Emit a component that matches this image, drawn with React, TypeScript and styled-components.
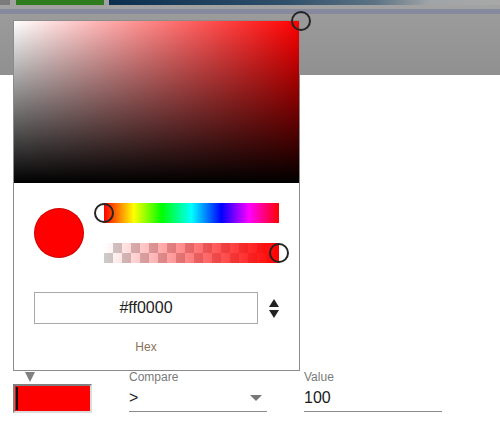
import React from "react";
import styled, { createGlobalStyle } from "styled-components";

const Global = createGlobalStyle`
  html, body { margin: 0; padding: 0; background: #fff; }
  body { font-family: "Liberation Sans", Arial, sans-serif; }
  * { box-sizing: border-box; }
`;

const Page = styled.div`
  position: relative;
  width: 500px;
  height: 427px;
  overflow: hidden;
  background: #fff;
`;

const Header = styled.div`
  display: flex;
  flex-direction: column;
  background: #a2a2a2;
`;

const TopStrip = styled.div`
  display: flex;
  height: 5px;
`;

const Seg = styled.div<{ $w?: number; $bg: string }>`
  width: ${(p) => (p.$w ? `${p.$w}px` : "auto")};
  flex: ${(p) => (p.$w ? "none" : "1")};
  background: ${(p) => p.$bg};
`;

const Spacer = styled.div`
  height: 4px;
`;

const Band = styled.div`
  height: 5px;
  background: #878a9f;
`;

const Shade = styled.div`
  height: 61px;
  background: linear-gradient(#9b9b9b, #909090);
`;

const FormRow = styled.div`
  display: flex;
  align-items: flex-start;
  margin-top: 295px;
  padding-left: 13px;
`;

const SwatchBox = styled.div`
  display: flex;
  width: 79px;
  height: 29px;
  margin-top: 14px;
  border: 2px solid;
  border-color: #808080 #dcdcdc #dcdcdc #808080;
  background: #ff0000;
`;

const Caret = styled.div`
  width: 1.5px;
  height: 23px;
  margin: 1px 0 0 1px;
  background: #111;
`;

const Field = styled.div<{ $ml: number }>`
  display: flex;
  flex-direction: column;
  width: 138px;
  margin-left: ${(p) => p.$ml}px;
`;

const Label = styled.div`
  font-size: 12px;
  line-height: 14px;
  color: #7a7a7a;
`;

const Control = styled.div`
  display: flex;
  align-items: center;
  justify-content: space-between;
  margin-top: 4px;
  padding-bottom: 3px;
  border-bottom: 1px solid #8a8a8a;
  font-size: 16px;
  line-height: 20px;
  color: #1a1a1a;
`;

const DropTri = styled.div`
  width: 0;
  height: 0;
  margin-right: 5px;
  border-left: 6.5px solid transparent;
  border-right: 6.5px solid transparent;
  border-top: 6px solid #777;
`;

const Popover = styled.div`
  position: absolute;
  left: 13px;
  top: 20px;
  width: 287px;
  border: 1px solid #8c8c8c;
  background: #fff;
`;

const PopArrow = styled.div`
  position: absolute;
  left: 11px;
  bottom: -12px;
  width: 0;
  height: 0;
  border-left: 5.5px solid transparent;
  border-right: 5.5px solid transparent;
  border-top: 10px solid #808080;
`;

const SatArea = styled.div`
  position: relative;
  height: 162px;
  background: linear-gradient(to top, #000, rgba(0, 0, 0, 0)),
    linear-gradient(to right, #fff, #f00);
`;

const Handle = styled.div`
  position: absolute;
  width: 20px;
  height: 20px;
  border: 2px solid #242424;
  border-radius: 50%;
`;

const SatHandle = styled(Handle)`
  top: -10px;
  right: -12px;
`;

const Body = styled.div`
  display: flex;
  flex-direction: column;
  padding: 20px 20px 16px 20px;
`;

const TopRow = styled.div`
  display: flex;
  align-items: center;
  gap: 20px;
`;

const Preview = styled.div`
  width: 50px;
  height: 50px;
  border-radius: 50%;
  background: #ff0000;
  box-shadow: inset 0 0 0 1px rgba(0, 0, 0, 0.2);
`;

const Sliders = styled.div`
  display: flex;
  flex-direction: column;
  gap: 20px;
  width: 175px;
`;

const HueBar = styled.div`
  position: relative;
  height: 20px;
  background: linear-gradient(
    to right,
    #f00 0%,
    #ff0 17%,
    #0f0 33%,
    #0ff 50%,
    #00f 67%,
    #f0f 83%,
    #f00 100%
  );
`;

const AlphaBar = styled.div`
  position: relative;
  height: 20px;
  background: linear-gradient(to right, rgba(255, 0, 0, 0), #ff0000),
    repeating-conic-gradient(#cccccc 0% 25%, #ffffff 0% 50%) 0 0 / 18px 20px;
`;

const HueHandle = styled(Handle)`
  top: 0;
  left: -10px;
`;

const AlphaHandle = styled(Handle)`
  top: 0;
  right: -10px;
`;

const HexRow = styled.div`
  display: flex;
  align-items: center;
  gap: 11px;
  margin-top: 29px;
`;

const HexInput = styled.div`
  width: 224px;
  height: 32px;
  border: 1px solid #a9a9a9;
  display: flex;
  align-items: center;
  justify-content: center;
  font-size: 16px;
  color: #222;
`;

const Stepper = styled.div`
  display: flex;
  flex-direction: column;
  gap: 3px;
`;

const Tri = styled.div<{ $up?: boolean }>`
  width: 0;
  height: 0;
  border-left: 5px solid transparent;
  border-right: 5px solid transparent;
  ${(p) =>
    p.$up ? "border-bottom: 8px solid #222;" : "border-top: 8px solid #222;"}
`;

const HexLabel = styled.div`
  width: 224px;
  margin-top: 16px;
  text-align: center;
  font-size: 12px;
  line-height: 14px;
  color: #8a7358;
`;

export default function App() {
  return (
    <Page>
      <Global />
      <Header>
        <TopStrip>
          <Seg $w={10} $bg="#7b7b7b" />
          <Seg $w={6} $bg="#a2a2a2" />
          <Seg $w={88} $bg="#2f7b1f" />
          <Seg $w={5} $bg="#a2a2a2" />
          <Seg $bg="linear-gradient(to right, #0a2e4e 0%, #2f4f6a 45%, #5c7384 68%, #a0a4a7 82%, #a8a8a8 100%)" />
        </TopStrip>
        <Spacer />
        <Band />
        <Shade />
      </Header>

      <FormRow>
        <SwatchBox>
          <Caret />
        </SwatchBox>
        <Field $ml={37}>
          <Label>Compare</Label>
          <Control>
            <span>&gt;</span>
            <DropTri />
          </Control>
        </Field>
        <Field $ml={37}>
          <Label>Value</Label>
          <Control>
            <span>100</span>
          </Control>
        </Field>
      </FormRow>

      <Popover>
        <SatArea>
          <SatHandle />
        </SatArea>
        <Body>
          <TopRow>
            <Preview />
            <Sliders>
              <HueBar>
                <HueHandle />
              </HueBar>
              <AlphaBar>
                <AlphaHandle />
              </AlphaBar>
            </Sliders>
          </TopRow>
          <HexRow>
            <HexInput>#ff0000</HexInput>
            <Stepper>
              <Tri $up />
              <Tri />
            </Stepper>
          </HexRow>
          <HexLabel>Hex</HexLabel>
        </Body>
        <PopArrow />
      </Popover>
    </Page>
  );
}
